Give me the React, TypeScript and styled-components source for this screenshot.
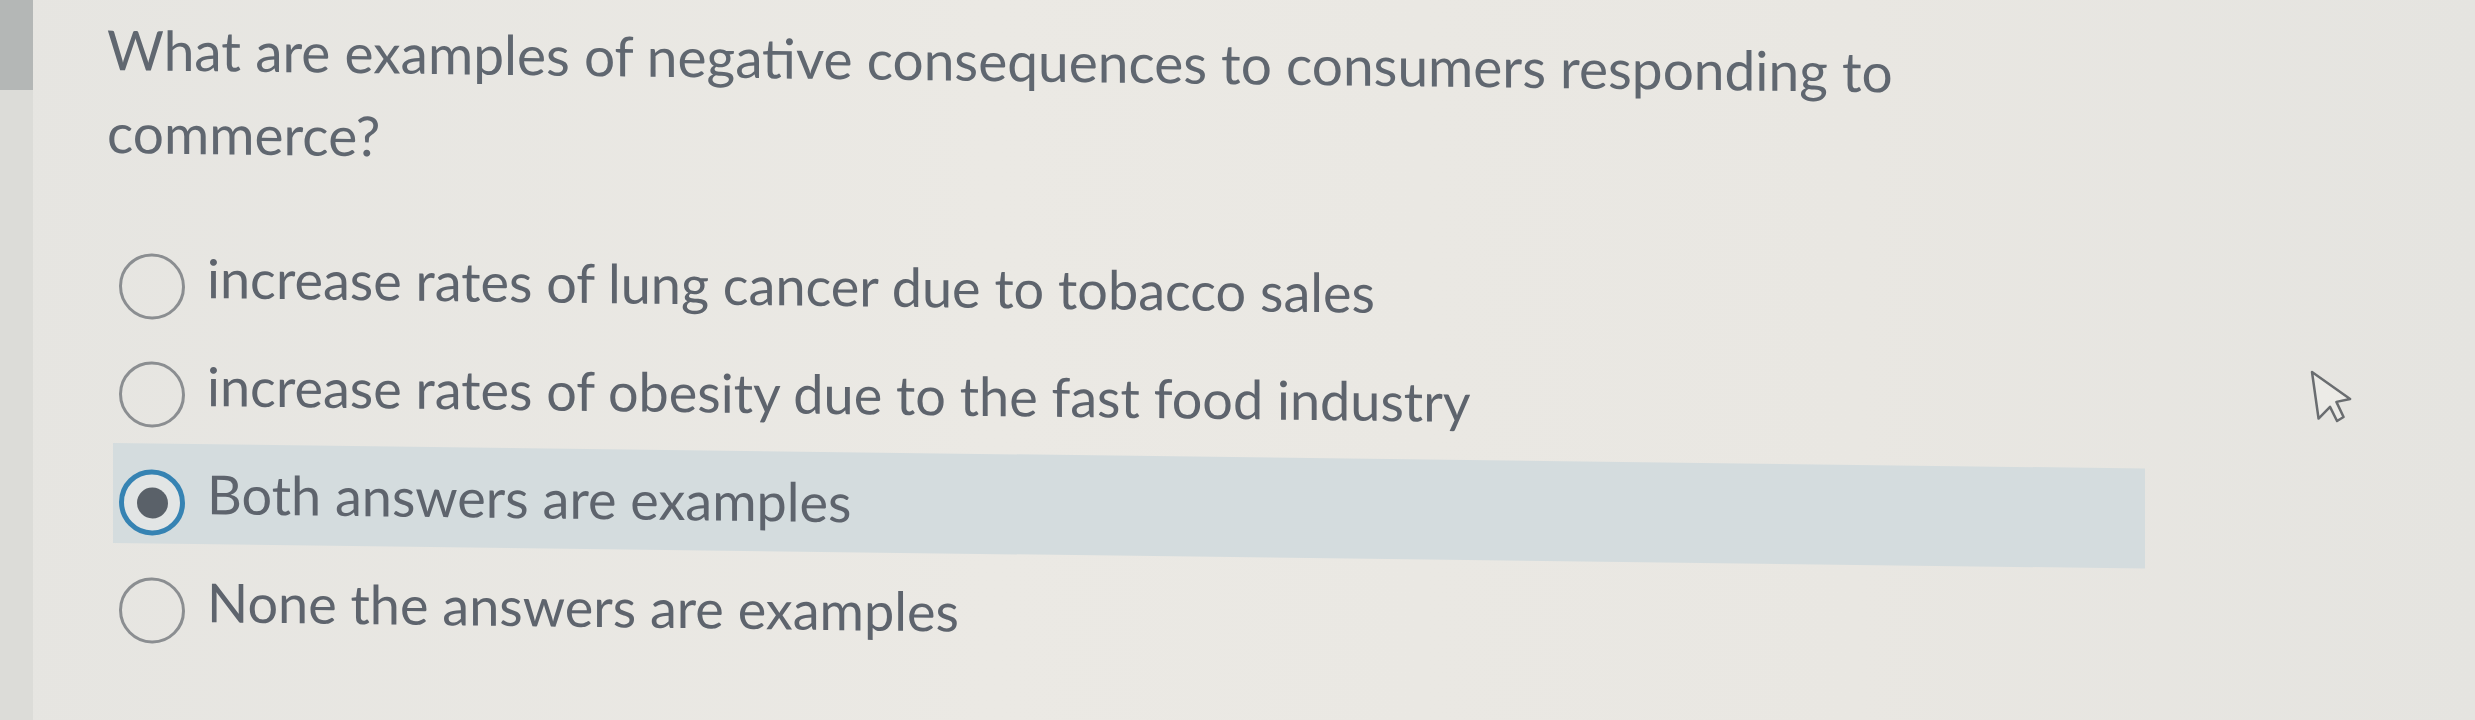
import React from "react";
import styled, { createGlobalStyle } from "styled-components";

const Global = createGlobalStyle`
  html, body { margin: 0; padding: 0; }
  body {
    background: #e8e6e1;
    font-family: Lato, "Open Sans", "Liberation Sans", sans-serif;
    overflow: hidden;
  }
`;

const Page = styled.div`
  position: relative;
  display: flex;
  width: 2475px;
  height: 720px;
  overflow: hidden;
  background: linear-gradient(90deg, #e6e5e1 0%, #ebe9e4 40%, #e9e7e2 75%, #e5e4e0 100%);
`;

const SideStrip = styled.div`
  width: 33px;
  flex: 0 0 33px;
  display: flex;
  flex-direction: column;
  background: #dcdcd8;
`;

const SideTab = styled.div`
  height: 90px;
  background: #b4b7b6;
`;

const Content = styled.div`
  flex: 1;
  padding: 7px 0 0 74px;
  display: flex;
  flex-direction: column;
  transform-origin: 0 0;
  transform: skewY(0.72deg);
`;

const Question = styled.div`
  font-size: 55px;
  line-height: 83px;
  color: #606770;
  width: 1900px;
`;

const Options = styled.div`
  display: flex;
  flex-direction: column;
  gap: 8px;
  margin-top: 53px;
  margin-left: -74px;
  padding-left: 80px;
`;

const Row = styled.div<{ $selected?: boolean }>`
  display: flex;
  align-items: center;
  width: 2032px;
  height: 100px;
  padding-left: 6px;
  box-sizing: border-box;
  background: ${(p) => (p.$selected ? "#d4dcde" : "transparent")};
`;

const Radio = styled.span<{ $selected?: boolean }>`
  flex: 0 0 auto;
  width: 66px;
  height: 66px;
  box-sizing: border-box;
  border-radius: 50%;
  margin-top: 18px;
  display: flex;
  align-items: center;
  justify-content: center;
  border: ${(p) => (p.$selected ? "5px solid #3683b3" : "3px solid #8b8e91")};
  background: ${(p) => (p.$selected ? "#e2e5e5" : "transparent")};
`;

const Dot = styled.span`
  width: 31px;
  height: 31px;
  border-radius: 50%;
  background: #5a6169;
`;

const Label = styled.span`
  margin-left: 22px;
  font-size: 54px;
  line-height: 100px;
  color: #5e646d;
  white-space: nowrap;
`;

const Cursor = styled.svg`
  position: absolute;
  left: 2306px;
  top: 368px;
`;

const options = [
  "increase rates of lung cancer due to tobacco sales",
  "increase rates of obesity due to the fast food industry",
  "Both answers are examples",
  "None the answers are examples",
];

export default function App() {
  return (
    <>
      <Global />
      <Page>
        <SideStrip>
          <SideTab />
        </SideStrip>
        <Content>
          <Question>
            What are examples of negative consequences to consumers responding to commerce?
          </Question>
          <Options>
            {options.map((o, i) => {
              const sel = i === 2;
              return (
                <Row key={o} $selected={sel}>
                  <Radio $selected={sel}>{sel && <Dot />}</Radio>
                  <Label>{o}</Label>
                </Row>
              );
            })}
          </Options>
        </Content>
        <Cursor width="50" height="66" viewBox="0 0 50 66">
          <path
            d="M6 4 L40 36 L26 37 L31 53 L24 56 L19 41 L6 51 Z"
            fill="#ecebe7"
            stroke="#6a6d70"
            strokeWidth="2.5"
            strokeLinejoin="round"
            transform="rotate(-8 6 4)"
          />
        </Cursor>
      </Page>
    </>
  );
}
